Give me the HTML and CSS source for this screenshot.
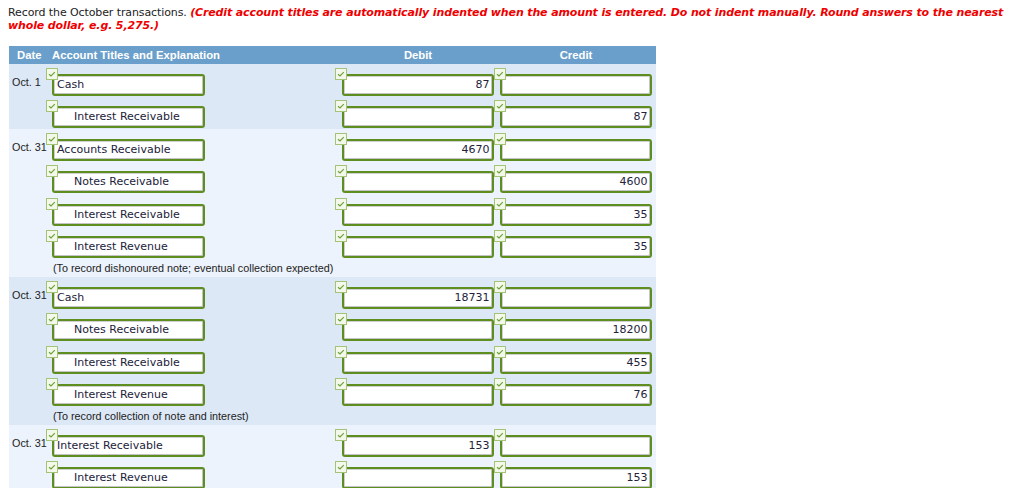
FILE: index.html
```html
<!DOCTYPE html>
<html>
<head>
<meta charset="utf-8">
<link rel="stylesheet" href="styles.css">
</head>
<body>
<div class="intro">
  <div class="line">Record the October transactions. <em class="note">(Credit account titles are automatically indented when the amount is entered. Do not indent manually. Round answers to the nearest</em></div>
  <div class="line"><em class="note">whole dollar, e.g. 5,275.)</em></div>
</div>

<div class="journal">
  <div class="jhead">
    <div class="c-date">Date</div>
    <div class="c-acct">Account Titles and Explanation</div>
    <div class="c-debit">Debit</div>
    <div class="c-credit">Credit</div>
  </div>

  <div class="group dark">
    <div class="row">
      <div class="c-date"><span class="date">Oct. 1</span></div>
      <div class="c-acct"><div class="field"><svg class="chk" viewBox="0 0 12 12"><rect x="0.5" y="0.5" width="11" height="11"/><path d="M3 6.2 L5 8 L8.8 4.2"/></svg><div class="box">Cash</div></div></div>
      <div class="c-debit"><div class="field"><svg class="chk" viewBox="0 0 12 12"><rect x="0.5" y="0.5" width="11" height="11"/><path d="M3 6.2 L5 8 L8.8 4.2"/></svg><div class="box num">87</div></div></div>
      <div class="c-credit"><div class="field"><svg class="chk" viewBox="0 0 12 12"><rect x="0.5" y="0.5" width="11" height="11"/><path d="M3 6.2 L5 8 L8.8 4.2"/></svg><div class="box num"></div></div></div>
    </div>
    <div class="row">
      <div class="c-date"></div>
      <div class="c-acct"><div class="field"><svg class="chk" viewBox="0 0 12 12"><rect x="0.5" y="0.5" width="11" height="11"/><path d="M3 6.2 L5 8 L8.8 4.2"/></svg><div class="box indent">Interest Receivable</div></div></div>
      <div class="c-debit"><div class="field"><svg class="chk" viewBox="0 0 12 12"><rect x="0.5" y="0.5" width="11" height="11"/><path d="M3 6.2 L5 8 L8.8 4.2"/></svg><div class="box num"></div></div></div>
      <div class="c-credit"><div class="field"><svg class="chk" viewBox="0 0 12 12"><rect x="0.5" y="0.5" width="11" height="11"/><path d="M3 6.2 L5 8 L8.8 4.2"/></svg><div class="box num">87</div></div></div>
    </div>
  </div>

  <div class="group light">
    <div class="row">
      <div class="c-date"><span class="date">Oct. 31</span></div>
      <div class="c-acct"><div class="field"><svg class="chk" viewBox="0 0 12 12"><rect x="0.5" y="0.5" width="11" height="11"/><path d="M3 6.2 L5 8 L8.8 4.2"/></svg><div class="box">Accounts Receivable</div></div></div>
      <div class="c-debit"><div class="field"><svg class="chk" viewBox="0 0 12 12"><rect x="0.5" y="0.5" width="11" height="11"/><path d="M3 6.2 L5 8 L8.8 4.2"/></svg><div class="box num">4670</div></div></div>
      <div class="c-credit"><div class="field"><svg class="chk" viewBox="0 0 12 12"><rect x="0.5" y="0.5" width="11" height="11"/><path d="M3 6.2 L5 8 L8.8 4.2"/></svg><div class="box num"></div></div></div>
    </div>
    <div class="row">
      <div class="c-date"></div>
      <div class="c-acct"><div class="field"><svg class="chk" viewBox="0 0 12 12"><rect x="0.5" y="0.5" width="11" height="11"/><path d="M3 6.2 L5 8 L8.8 4.2"/></svg><div class="box indent">Notes Receivable</div></div></div>
      <div class="c-debit"><div class="field"><svg class="chk" viewBox="0 0 12 12"><rect x="0.5" y="0.5" width="11" height="11"/><path d="M3 6.2 L5 8 L8.8 4.2"/></svg><div class="box num"></div></div></div>
      <div class="c-credit"><div class="field"><svg class="chk" viewBox="0 0 12 12"><rect x="0.5" y="0.5" width="11" height="11"/><path d="M3 6.2 L5 8 L8.8 4.2"/></svg><div class="box num">4600</div></div></div>
    </div>
    <div class="row">
      <div class="c-date"></div>
      <div class="c-acct"><div class="field"><svg class="chk" viewBox="0 0 12 12"><rect x="0.5" y="0.5" width="11" height="11"/><path d="M3 6.2 L5 8 L8.8 4.2"/></svg><div class="box indent">Interest Receivable</div></div></div>
      <div class="c-debit"><div class="field"><svg class="chk" viewBox="0 0 12 12"><rect x="0.5" y="0.5" width="11" height="11"/><path d="M3 6.2 L5 8 L8.8 4.2"/></svg><div class="box num"></div></div></div>
      <div class="c-credit"><div class="field"><svg class="chk" viewBox="0 0 12 12"><rect x="0.5" y="0.5" width="11" height="11"/><path d="M3 6.2 L5 8 L8.8 4.2"/></svg><div class="box num">35</div></div></div>
    </div>
    <div class="row">
      <div class="c-date"></div>
      <div class="c-acct"><div class="field"><svg class="chk" viewBox="0 0 12 12"><rect x="0.5" y="0.5" width="11" height="11"/><path d="M3 6.2 L5 8 L8.8 4.2"/></svg><div class="box indent">Interest Revenue</div></div></div>
      <div class="c-debit"><div class="field"><svg class="chk" viewBox="0 0 12 12"><rect x="0.5" y="0.5" width="11" height="11"/><path d="M3 6.2 L5 8 L8.8 4.2"/></svg><div class="box num"></div></div></div>
      <div class="c-credit"><div class="field"><svg class="chk" viewBox="0 0 12 12"><rect x="0.5" y="0.5" width="11" height="11"/><path d="M3 6.2 L5 8 L8.8 4.2"/></svg><div class="box num">35</div></div></div>
    </div>
    <div class="explain">(To record dishonoured note; eventual collection expected)</div>
  </div>

  <div class="group dark">
    <div class="row">
      <div class="c-date"><span class="date">Oct. 31</span></div>
      <div class="c-acct"><div class="field"><svg class="chk" viewBox="0 0 12 12"><rect x="0.5" y="0.5" width="11" height="11"/><path d="M3 6.2 L5 8 L8.8 4.2"/></svg><div class="box">Cash</div></div></div>
      <div class="c-debit"><div class="field"><svg class="chk" viewBox="0 0 12 12"><rect x="0.5" y="0.5" width="11" height="11"/><path d="M3 6.2 L5 8 L8.8 4.2"/></svg><div class="box num">18731</div></div></div>
      <div class="c-credit"><div class="field"><svg class="chk" viewBox="0 0 12 12"><rect x="0.5" y="0.5" width="11" height="11"/><path d="M3 6.2 L5 8 L8.8 4.2"/></svg><div class="box num"></div></div></div>
    </div>
    <div class="row">
      <div class="c-date"></div>
      <div class="c-acct"><div class="field"><svg class="chk" viewBox="0 0 12 12"><rect x="0.5" y="0.5" width="11" height="11"/><path d="M3 6.2 L5 8 L8.8 4.2"/></svg><div class="box indent">Notes Receivable</div></div></div>
      <div class="c-debit"><div class="field"><svg class="chk" viewBox="0 0 12 12"><rect x="0.5" y="0.5" width="11" height="11"/><path d="M3 6.2 L5 8 L8.8 4.2"/></svg><div class="box num"></div></div></div>
      <div class="c-credit"><div class="field"><svg class="chk" viewBox="0 0 12 12"><rect x="0.5" y="0.5" width="11" height="11"/><path d="M3 6.2 L5 8 L8.8 4.2"/></svg><div class="box num">18200</div></div></div>
    </div>
    <div class="row">
      <div class="c-date"></div>
      <div class="c-acct"><div class="field"><svg class="chk" viewBox="0 0 12 12"><rect x="0.5" y="0.5" width="11" height="11"/><path d="M3 6.2 L5 8 L8.8 4.2"/></svg><div class="box indent">Interest Receivable</div></div></div>
      <div class="c-debit"><div class="field"><svg class="chk" viewBox="0 0 12 12"><rect x="0.5" y="0.5" width="11" height="11"/><path d="M3 6.2 L5 8 L8.8 4.2"/></svg><div class="box num"></div></div></div>
      <div class="c-credit"><div class="field"><svg class="chk" viewBox="0 0 12 12"><rect x="0.5" y="0.5" width="11" height="11"/><path d="M3 6.2 L5 8 L8.8 4.2"/></svg><div class="box num">455</div></div></div>
    </div>
    <div class="row">
      <div class="c-date"></div>
      <div class="c-acct"><div class="field"><svg class="chk" viewBox="0 0 12 12"><rect x="0.5" y="0.5" width="11" height="11"/><path d="M3 6.2 L5 8 L8.8 4.2"/></svg><div class="box indent">Interest Revenue</div></div></div>
      <div class="c-debit"><div class="field"><svg class="chk" viewBox="0 0 12 12"><rect x="0.5" y="0.5" width="11" height="11"/><path d="M3 6.2 L5 8 L8.8 4.2"/></svg><div class="box num"></div></div></div>
      <div class="c-credit"><div class="field"><svg class="chk" viewBox="0 0 12 12"><rect x="0.5" y="0.5" width="11" height="11"/><path d="M3 6.2 L5 8 L8.8 4.2"/></svg><div class="box num">76</div></div></div>
    </div>
    <div class="explain">(To record collection of note and interest)</div>
  </div>

  <div class="group light">
    <div class="row">
      <div class="c-date"><span class="date">Oct. 31</span></div>
      <div class="c-acct"><div class="field"><svg class="chk" viewBox="0 0 12 12"><rect x="0.5" y="0.5" width="11" height="11"/><path d="M3 6.2 L5 8 L8.8 4.2"/></svg><div class="box">Interest Receivable</div></div></div>
      <div class="c-debit"><div class="field"><svg class="chk" viewBox="0 0 12 12"><rect x="0.5" y="0.5" width="11" height="11"/><path d="M3 6.2 L5 8 L8.8 4.2"/></svg><div class="box num">153</div></div></div>
      <div class="c-credit"><div class="field"><svg class="chk" viewBox="0 0 12 12"><rect x="0.5" y="0.5" width="11" height="11"/><path d="M3 6.2 L5 8 L8.8 4.2"/></svg><div class="box num"></div></div></div>
    </div>
    <div class="row">
      <div class="c-date"></div>
      <div class="c-acct"><div class="field"><svg class="chk" viewBox="0 0 12 12"><rect x="0.5" y="0.5" width="11" height="11"/><path d="M3 6.2 L5 8 L8.8 4.2"/></svg><div class="box indent">Interest Revenue</div></div></div>
      <div class="c-debit"><div class="field"><svg class="chk" viewBox="0 0 12 12"><rect x="0.5" y="0.5" width="11" height="11"/><path d="M3 6.2 L5 8 L8.8 4.2"/></svg><div class="box num"></div></div></div>
      <div class="c-credit"><div class="field"><svg class="chk" viewBox="0 0 12 12"><rect x="0.5" y="0.5" width="11" height="11"/><path d="M3 6.2 L5 8 L8.8 4.2"/></svg><div class="box num">153</div></div></div>
    </div>
  </div>
</div>
</body>
</html>
```

FILE: styles.css
```css
html, body {
  margin: 0;
  padding: 0;
  background: #fff;
}
body {
  font-family: "DejaVu Sans", Verdana, sans-serif;
  font-size: 11px;
  color: #222;
  overflow: hidden;
}
.intro {
  padding: 6px 0 0 8px;
  height: 46px;
  box-sizing: border-box;
}
.line {
  line-height: 13px;
  white-space: nowrap;
  letter-spacing: -0.1px;
}
.note {
  color: #ee0000;
  font-weight: bold;
  font-style: italic;
  font-size: 11px;
  letter-spacing: -0.13px;
}
.journal {
  margin-left: 9px;
  width: 647px;
}
.jhead {
  display: flex;
  height: 18px;
  line-height: 18px;
  background: #6b9fcb;
  color: #fff;
  font-family: "Liberation Sans", Arial, sans-serif;
  font-weight: bold;
  font-size: 11.3px;
}
.c-date { width: 37px; flex: none; box-sizing: border-box; }
.c-acct { width: 289px; flex: none; box-sizing: border-box; }
.c-debit { width: 159px; flex: none; box-sizing: border-box; }
.c-credit { width: 162px; flex: none; box-sizing: border-box; }
.jhead .c-date { padding-left: 8px; }
.jhead .c-acct { padding-left: 6px; }
.jhead .c-debit { padding-left: 7px; text-align: center; }
.jhead .c-credit { padding-left: 6px; padding-right: 4px; text-align: center; }

.group.dark { background: #dde8f6; }
.group.light { background: #ecf3fc; }
.row {
  display: flex;
  height: 32.5px;
  box-sizing: border-box;
  padding-top: 3.5px;
}
.row .c-date {
  padding-left: 3px;
  padding-top: 8.5px;
  line-height: 13px;
  white-space: nowrap;
  font-family: "Liberation Sans", Arial, sans-serif;
  font-size: 10.8px;
}
.field {
  position: relative;
  padding-top: 6px;
}
.c-acct .field { padding-left: 6px; }
.c-debit .field { padding-left: 7px; }
.c-credit .field { padding-left: 6px; }
.chk {
  position: absolute;
  left: 0;
  top: 0;
  width: 12px;
  height: 12px;
  z-index: 2;
}
.chk rect {
  fill: #f3f8ea;
  stroke: #a3c476;
  stroke-width: 1;
}
.chk path {
  fill: none;
  stroke: #6aa336;
  stroke-width: 1.2;
}
.box {
  position: relative;
  z-index: 1;
  width: 153px;
  height: 22px;
  box-sizing: border-box;
  border: 2px solid #5e8e1f;
  border-radius: 3px;
  background: #fff;
  box-shadow: inset 1px 1px 0 #d0d0d0, inset -1px -1px 0 #c4c4c4;
  line-height: 18px;
  padding: 0 3px;
  white-space: nowrap;
  overflow: hidden;
  color: #22223a;
}
.c-debit .box, .c-credit .box { width: 152px; }
.box.indent { padding-left: 20px; }
.box.num { text-align: right; padding-right: 2.5px; }
.explain {
  height: 18px;
  line-height: 18px;
  padding-left: 44px;
  white-space: nowrap;
  font-family: "Liberation Sans", Arial, sans-serif;
  font-size: 10.8px;
}
```
